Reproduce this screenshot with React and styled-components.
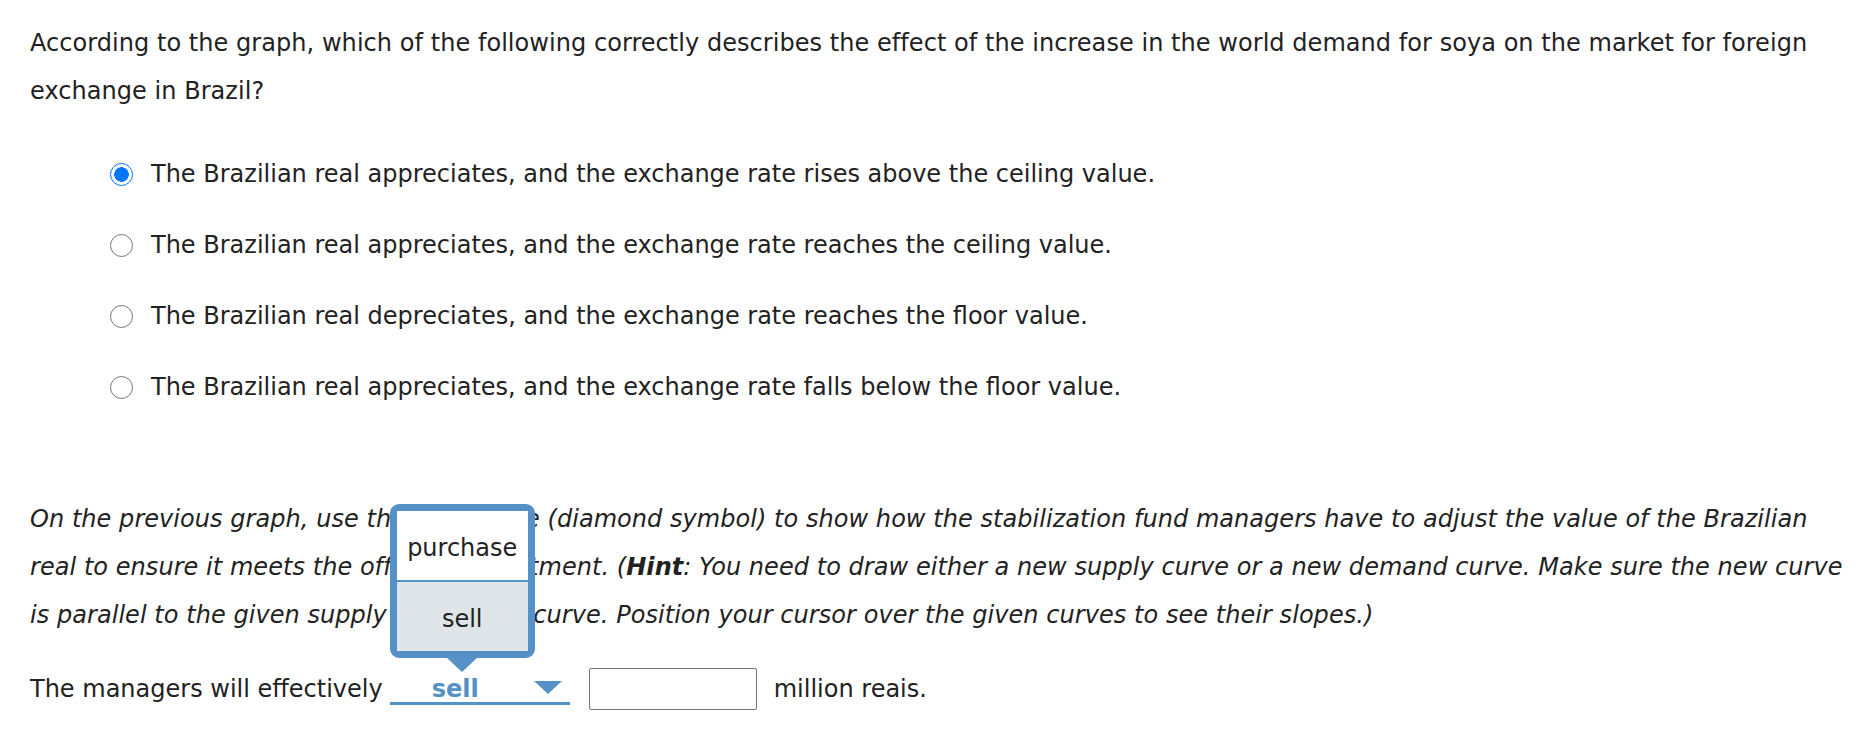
import React from "react";
import styled, { createGlobalStyle } from "styled-components";

const GlobalStyle = createGlobalStyle`
  body {
    margin: 0;
    background: #fff;
    color: #222;
    font-family: "DejaVu Sans", Verdana, sans-serif;
    font-size: 24px;
  }
`;

const choices = [
  "The Brazilian real appreciates, and the exchange rate rises above the ceiling value.",
  "The Brazilian real appreciates, and the exchange rate reaches the ceiling value.",
  "The Brazilian real depreciates, and the exchange rate reaches the floor value.",
  "The Brazilian real appreciates, and the exchange rate falls below the floor value.",
];

export default function App() {
  return (
    <>
      <GlobalStyle />
      <Page>
        <Question>
          According to the graph, which of the following correctly describes the effect of the increase in the world demand for soya on the market for foreign
          <br />
          exchange in Brazil?
        </Question>

        <Choices>
          {choices.map((text, i) => (
            <Choice key={i}>
              <Radio $checked={i === 0} />
              <span>{text}</span>
            </Choice>
          ))}
        </Choices>

        <Instructions>
          On the previous graph, use the drawn line (diamond symbol) to show how the stabilization fund managers have to adjust the value of the Brazilian
          <br />
          real to ensure it meets the official commitment. (<b>Hint</b>: You need to draw either a new supply curve or a new demand curve. Make sure the new curve
          <br />
          is parallel to the given supply or demand curve. Position your cursor over the given curves to see their slopes.)
        </Instructions>

        <AnswerRow>
          <span>The managers will effectively</span>
          <SelectWrap>
            <Menu>
              <Option>purchase</Option>
              <Option $active>sell</Option>
            </Menu>
            <Select>
              <SelectValue>sell</SelectValue>
              <Caret />
            </Select>
          </SelectWrap>
          <Input type="text" />
          <span>million reais.</span>
        </AnswerRow>
      </Page>
    </>
  );
}

const Page = styled.div`
  padding: 19px 20px 0 30px;
`;

const Question = styled.p`
  margin: 0;
  line-height: 48px;
  letter-spacing: 0.05px;
  white-space: nowrap;
`;

const Choices = styled.div`
  display: flex;
  flex-direction: column;
  gap: 23px;
  margin-top: 35px;
  padding-left: 80px;
`;

const Choice = styled.label`
  display: flex;
  align-items: center;
  height: 48px;
  gap: 18px;
`;

const Radio = styled.span`
  box-sizing: border-box;
  width: 23px;
  height: 23px;
  border-radius: 50%;
  border: ${(p) => (p.$checked ? "1.5px solid #0075ff" : "1.5px solid #767676")};
  background: ${(p) =>
    p.$checked
      ? "radial-gradient(circle, #0075ff 0 7px, #fff 7.5px)"
      : "#fff"};
  flex-shrink: 0;
`;

const Instructions = styled.p`
  margin: 84px 0 0;
  line-height: 48px;
  font-style: italic;
  letter-spacing: 0.05px;
  white-space: nowrap;

  & b {
    font-weight: bold;
  }
`;

const AnswerRow = styled.div`
  display: flex;
  align-items: center;
  height: 48px;
  margin-top: 26px;
`;

const SelectWrap = styled.div`
  position: relative;
  margin-left: 7px;
  padding-bottom: 2px;
`;

const Select = styled.div`
  box-sizing: border-box;
  width: 180px;
  height: 34px;
  display: flex;
  align-items: flex-end;
  justify-content: space-between;
  padding: 0 8px 0 42px;
  border-bottom: 3px solid #5591c6;
`;

const SelectValue = styled.span`
  color: #5591c6;
  font-weight: bold;
  line-height: 26px;
`;

const Caret = styled.span`
  width: 0;
  height: 0;
  margin-bottom: 8px;
  border-left: 14px solid transparent;
  border-right: 14px solid transparent;
  border-top: 13px solid #5591c6;
`;

const Menu = styled.div`
  position: absolute;
  left: 0;
  bottom: 49px;
  box-sizing: border-box;
  width: 145px;
  border: 7px solid #5591c6;
  border-radius: 9px;
  background: #5591c6;
  display: flex;
  flex-direction: column;
  gap: 2px;

  &::after {
    content: "";
    position: absolute;
    left: 50%;
    bottom: -21px;
    transform: translateX(-50%);
    border-left: 15px solid transparent;
    border-right: 15px solid transparent;
    border-top: 14px solid #5591c6;
  }
`;

const Option = styled.div`
  box-sizing: border-box;
  height: 69px;
  padding-top: 4px;
  display: flex;
  align-items: center;
  justify-content: center;
  background: ${(p) => (p.$active ? "#dfe6ea" : "#fff")};
  color: #222;
`;

const Input = styled.input`
  box-sizing: border-box;
  width: 168px;
  height: 42px;
  margin-left: 19px;
  margin-right: 17px;
  border: 1px solid #767676;
  border-radius: 2px;
  font: inherit;
`;
